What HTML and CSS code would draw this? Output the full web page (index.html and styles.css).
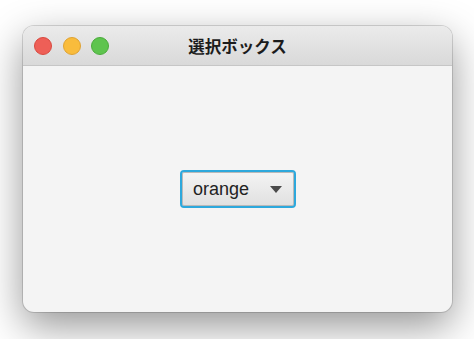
FILE: index.html
```html
<!DOCTYPE html>
<html lang="ja">
<head>
    <meta charset="UTF-8">
    <meta name="viewport" content="width=device-width, initial-scale=1.0">
    <title>選択ボックス</title>
    <link rel="stylesheet" href="styles.css">
</head>
<body>
    <div class="window">
        <div class="titlebar">
            <div class="lights">
                <span class="light red"></span>
                <span class="light yellow"></span>
                <span class="light green"></span>
            </div>
            <div class="title">選択ボックス</div>
            <div></div>
        </div>
        <div class="content">
            <div class="combo">
                <span class="combo-value">orange</span>
                <span class="arrow"></span>
            </div>
        </div>
    </div>
</body>
</html>
```

FILE: styles.css
```css
* {
    margin: 0;
    padding: 0;
    box-sizing: border-box;
}

html, body {
    height: 100%;
}

body {
    background: #fff;
    padding: 26px 22px 0 23px;
    font-family: 'Liberation Sans', Arial, sans-serif;
}

.window {
    width: 429px;
    height: 286px;
    border-radius: 11px;
    background: #f4f4f4;
    display: flex;
    flex-direction: column;
    overflow: hidden;
    box-shadow: 0 0 0 1px rgba(0, 0, 0, 0.14), 0 14px 40px rgba(0, 0, 0, 0.42);
}

.titlebar {
    height: 40px;
    display: grid;
    grid-template-columns: 1fr auto 1fr;
    align-items: center;
    background: linear-gradient(#ebebeb, #d9d9d9);
    border-bottom: 1px solid #c6c6c6;
}

.lights {
    display: flex;
    gap: 10.5px;
    padding-left: 11px;
}

.light {
    width: 18px;
    height: 18px;
    border-radius: 50%;
}

.red {
    background: #ee5f57;
    border: 1px solid #d8493f;
}

.yellow {
    background: #f9bc3c;
    border: 1px solid #dea233;
}

.green {
    background: #5ec44e;
    border: 1px solid #4aab3b;
}

.title {
    font-family: 'Noto Sans CJK JP', sans-serif;
    font-weight: bold;
    font-size: 16.5px;
    color: #1c1c1c;
}

.content {
    flex: 1;
    display: flex;
    justify-content: center;
    align-items: center;
}

.combo {
    width: 116px;
    height: 38px;
    margin-left: 1px;
    border: 2px solid #2da8dc;
    border-radius: 4px;
    background: linear-gradient(#f4f4f4, #e0e0e0);
    box-shadow: inset 0 0 0 1px #b9b9b9;
    display: flex;
    align-items: center;
    justify-content: space-between;
    padding: 0 12px 0 11px;
}

.combo-value {
    font-size: 18px;
    color: #222;
}

.arrow {
    width: 0;
    height: 0;
    border-left: 6.5px solid transparent;
    border-right: 6.5px solid transparent;
    border-top: 7px solid #4a4a4a;
}
```
